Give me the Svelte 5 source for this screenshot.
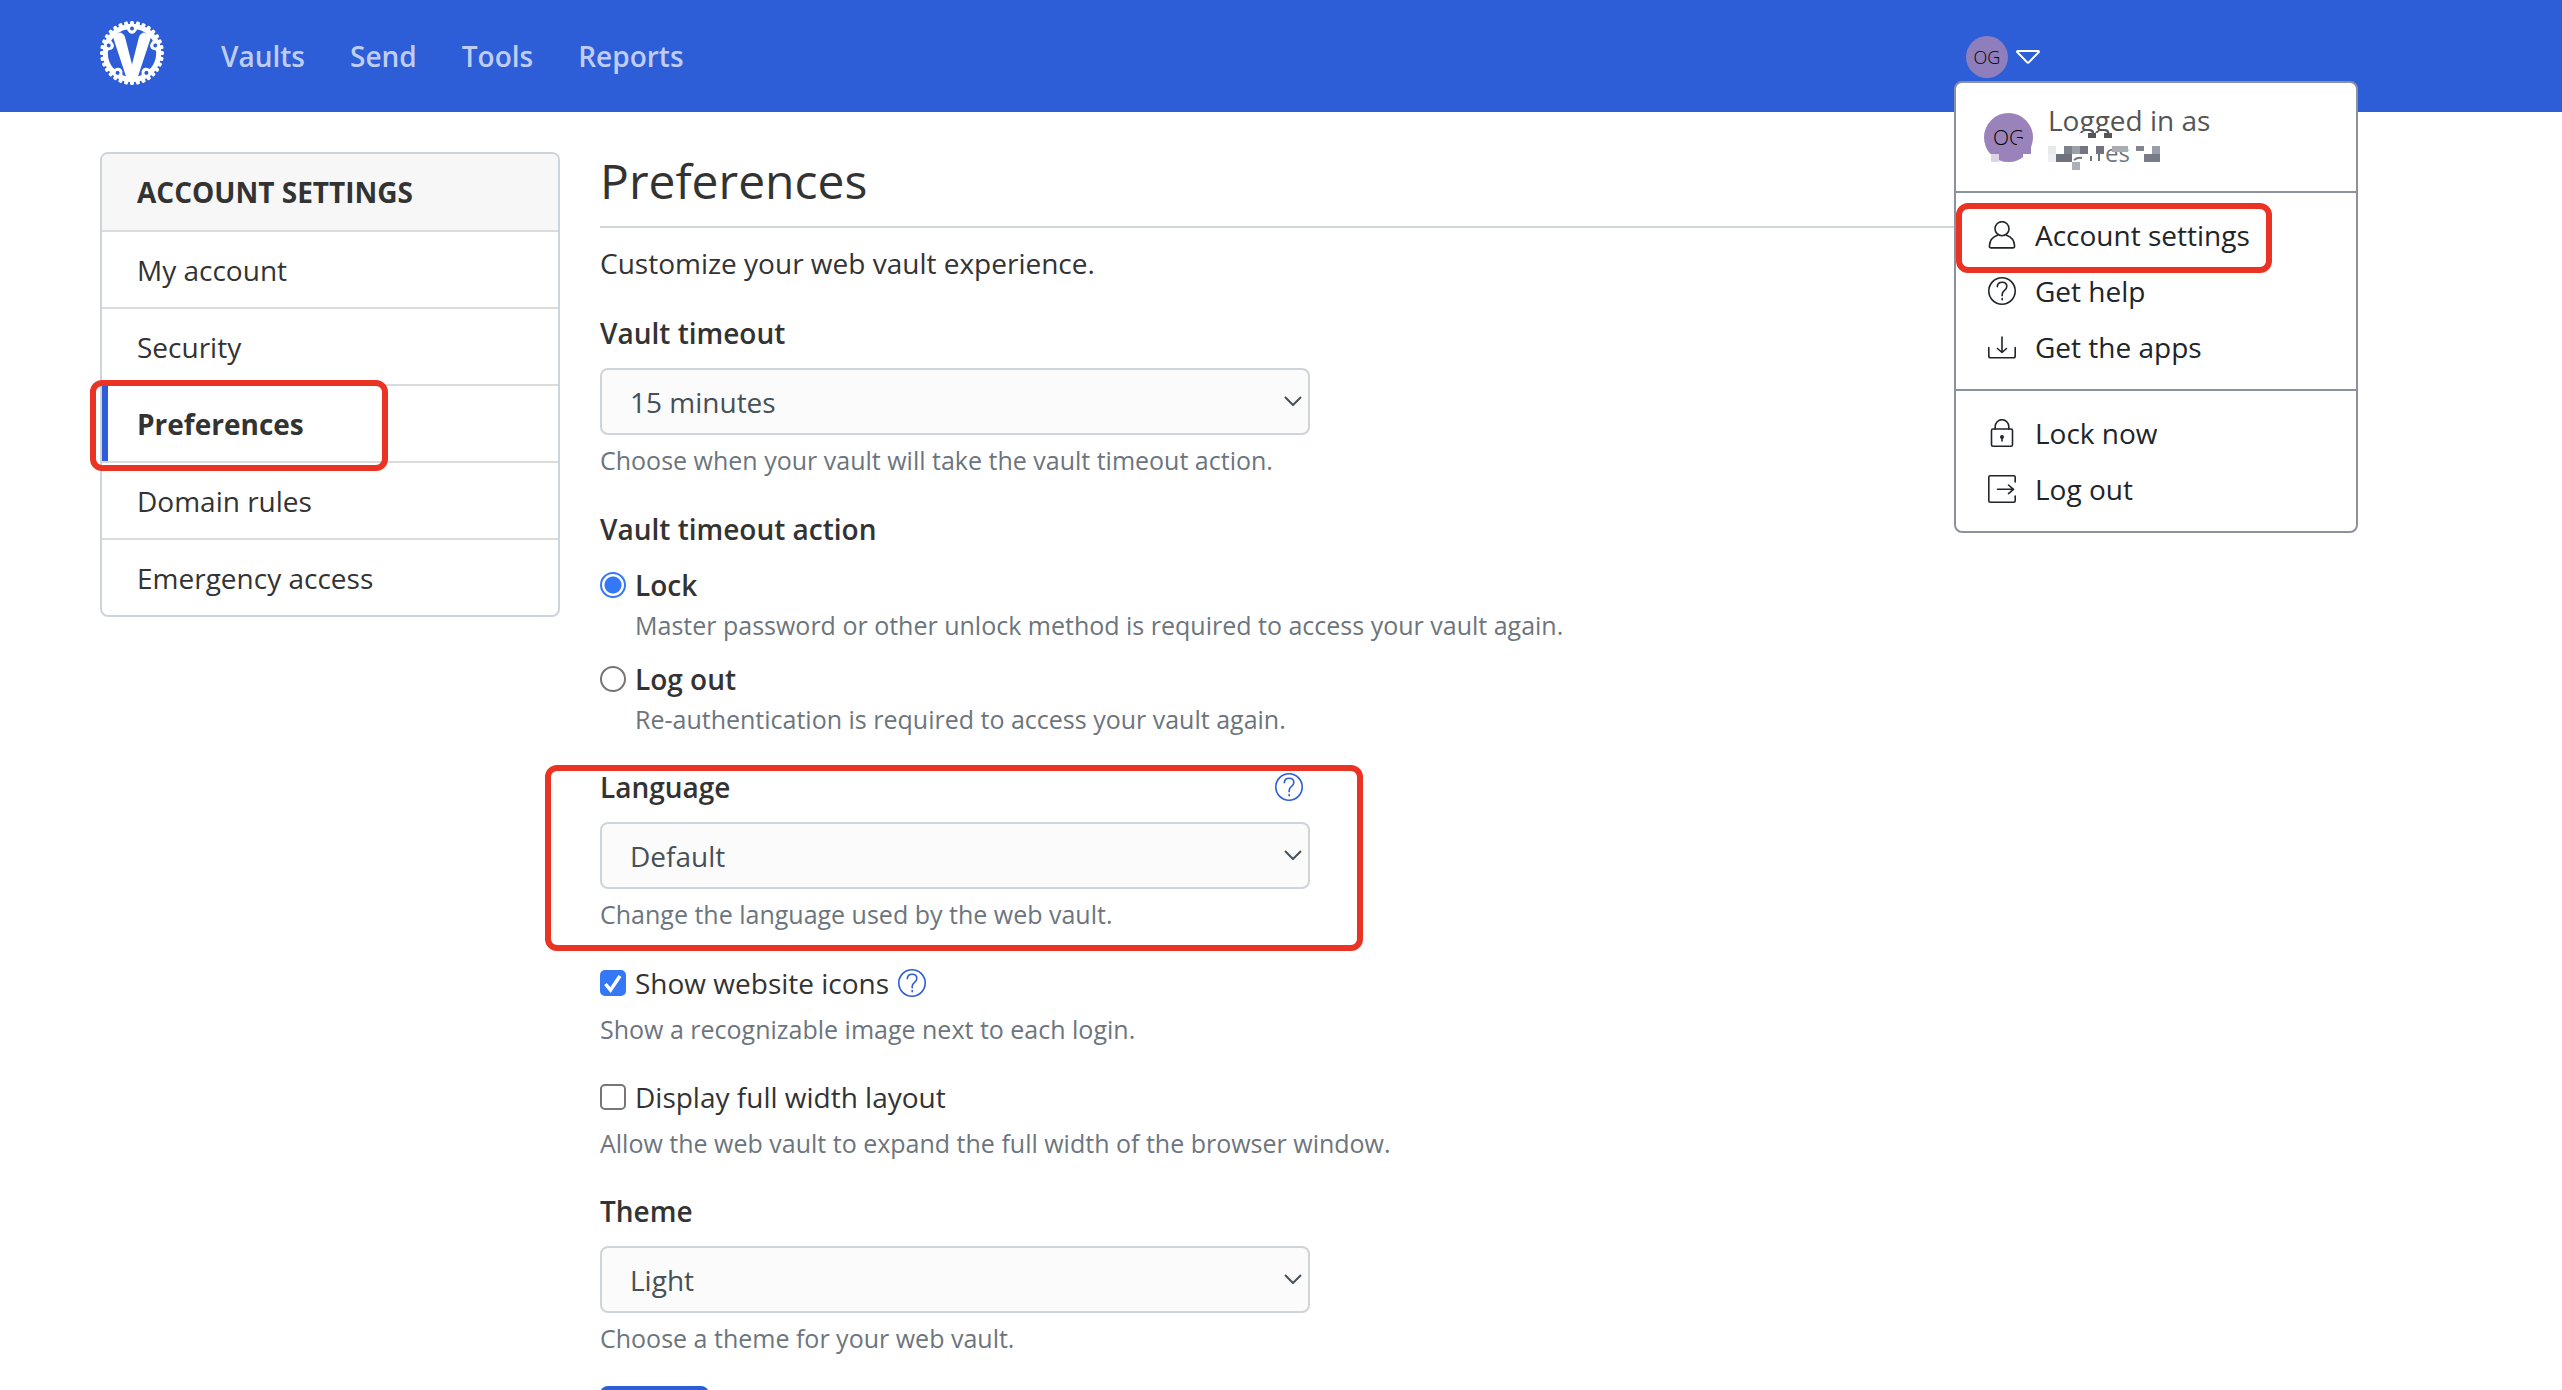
<script lang="ts">
	type Icon = 'user' | 'help' | 'download' | 'lock' | 'logout'

	interface MenuItem {
		label: string
		icon: Icon
		marked?: boolean
	}

	const links = ['Vaults', 'Send', 'Tools', 'Reports']
	const sections = ['My account', 'Security', 'Preferences', 'Domain rules', 'Emergency access']
	const menuGroups: MenuItem[][] = [
		[
			{ label: 'Account settings', icon: 'user', marked: true },
			{ label: 'Get help', icon: 'help' },
			{ label: 'Get the apps', icon: 'download' }
		],
		[
			{ label: 'Lock now', icon: 'lock' },
			{ label: 'Log out', icon: 'logout' }
		]
	]
	const teeth = Array.from({ length: 32 }, (_, i) => i * 11.25)
	const bolts = [0, 72, 144, 216, 288]

	// censored user name: x, y, width, height, shade
	const blocks: [number, number, number, number, string][] = [
		[32, 1, 36, 8, '#fff'],
		[40, 1, 8, 5, '#555'],
		[56, 1, 8, 5, '#555'],
		[0, 14, 8, 8, '#e6e8ea'],
		[0, 22, 8, 8, '#eeeff0'],
		[16, 14, 8, 8, '#7d828c'],
		[24, 14, 8, 8, '#9b9fa6'],
		[32, 14, 8, 8, '#70757f'],
		[8, 22, 16, 8, '#6d727d'],
		[24, 30, 8, 8, '#adb0b6'],
		[48, 14, 8, 8, '#6f747f'],
		[64, 14, 16, 6, '#a9adb3'],
		[88, 14, 8, 5, '#80858e'],
		[104, 14, 8, 8, '#9a9ea6'],
		[96, 22, 16, 8, '#777c87']
	]

	let active = $state('Preferences')
	let menuOpen = $state(true)
	let timeout = $state('15 minutes')
	let action = $state('lock')
	let language = $state('Default')
	let showIcons = $state(true)
	let fullWidth = $state(false)
	let theme = $state('Light')
</script>

{#snippet helpIcon()}
	<svg class="icon" viewBox="0 0 28 28" aria-hidden="true">
		<circle cx="14" cy="14" r="13.2" />
		<path d="M9.3 9.6C9.5 6.900 11.400 5.300 14.100 5.300s4.700 1.700 4.700 4.200c0 2-1 3-2.500 4.100-1.500 1.200-2.100 1.900-2.100 3.700v1.500" />
		<path d="M14.200 21.500v1.300" />
	</svg>
{/snippet}

{#snippet menuIcon(name: Icon)}
	{#if name === 'help'}
		{@render helpIcon()}
	{:else}
		<svg class="icon" viewBox="0 0 28 28" aria-hidden="true">
			{#if name === 'user'}
				<circle cx="14" cy="7.700" r="7" />
				<path d="M9.500 14.300C5 15.800 1.700 20 1.400 24.900c-.1 1.300.6 2 1.800 2h21.600c1.200 0 1.900-.7 1.800-2-.3-4.900-3.600-9.100-8.100-10.600" />
			{:else if name === 'download'}
				<path d="M.8 14.500v8.500c0 1.200.6 1.800 1.800 1.800h22.800c1.200 0 1.800-.6 1.800-1.800v-8.500M14 4v15.500M9.500 15.500l4.500 4 4.500-4" />
			{:else if name === 'lock'}
				<rect x="3.500" y="10" width="21" height="17.200" rx="1.500" />
				<path d="M7.200 10V7.500a6.800 6.800 0 0 1 13.600 0V10" />
				<path d="M14 18v4" />
				<circle class="solid" cx="14" cy="18" r="1.200" />
			{:else}
				<path d="M27.200 7V2.300c0-1-.5-1.500-1.500-1.500H2.300C1.300.8.8 1.300.8 2.300v23.400c0 1 .5 1.500 1.500 1.500h23.400c1 0 1.500-.5 1.500-1.500V21M9.500 14.300h16M20.500 10l5 4.300-5 4.300" />
			{/if}
		</svg>
	{/if}
{/snippet}

<header class="navbar">
	<div class="container bar">
		<a class="brand" href="#vaults" aria-label="Vaultwarden">
			<svg viewBox="0 0 64 64" aria-hidden="true">
				{#each teeth as angle}
					<rect x="30" y="0" width="4" height="5" rx="1.500" transform="rotate({angle} 32 32)" />
				{/each}
				<circle class="ring" cx="32" cy="32" r="26.700" />
				{#each bolts as angle}
					<g transform="rotate({angle} 32 32)">
						<path d="M25 6h14l-4 5.500q-3 2.500-6 0z" />
						<circle class="hole" cx="32" cy="7.500" r="2" />
					</g>
				{/each}
				<path d="M12.500 14.500L20 11.500q3.500.5 5 4.500l7 27.500L39 16q1.500-4 5-4.500l7.500 3L36.500 60h-9z" />
			</svg>
		</a>
		<nav class="links" aria-label="Main">
			{#each links as link}
				<a href="#{link.toLowerCase()}">{link}</a>
			{/each}
		</nav>
		<div class="account">
			<button class="toggle" aria-label="Account menu" aria-expanded={menuOpen} onclick={() => (menuOpen = !menuOpen)}>
				<span class="avatar">OG</span>
				<svg class="caret" viewBox="0 0 24 14" aria-hidden="true">
					<path d="M2 1h20c.9 0 1.200.7.6 1.300L12.800 12.400c-.5.600-1.100.600-1.600 0L1.400 2.300C.8 1.700 1.100 1 2 1z" />
				</svg>
			</button>
			{#if menuOpen}
				<div class="menu">
					<div class="whoami">
						<svg class="portrait" viewBox="0 0 49 49" aria-hidden="true">
							<circle cx="24.500" cy="24.500" r="24.500" />
							<text x="9" y="32">OG</text>
							<path d="M33 26h6v8h-6zM39 20h8v21h-8z" />
							<path class="cut" d="M0 41h15v8H0zM39 41h10v8H39z" />
							<path class="faint" d="M7 41h8v8H7z" />
						</svg>
						<div class="who">
							<span>Logged in as</span>
							<svg class="censored" viewBox="0 0 112 38" aria-hidden="true">
								<text x="57" y="30">es</text>
								<path d="M43 24v5M51 22v7M26 28q4-3 8-2" />
								{#each blocks as [x, y, width, height, fill]}
									<rect {x} {y} {width} {height} {fill} />
								{/each}
							</svg>
						</div>
					</div>
					{#each menuGroups as group}
						<div class="group">
							{#each group as item}
								<a class="item" class:marked={item.marked} href="#{item.icon}">
									{@render menuIcon(item.icon)}
									{item.label}
								</a>
							{/each}
						</div>
					{/each}
				</div>
			{/if}
		</div>
	</div>
</header>

<div class="container page">
	<aside class="card">
		<h2>Account settings</h2>
		<nav aria-label="Account settings">
			{#each sections as section}
				<a
					class="section"
					class:active={active === section}
					href="#{section.toLowerCase().replace(' ', '-')}"
					onclick={() => (active = section)}
				>{section}</a>
			{/each}
		</nav>
	</aside>

	<main>
		<h1>Preferences</h1>
		<p class="intro">Customize your web vault experience.</p>

		<form>
			<div class="field">
				<label class="title" for="timeout">Vault timeout</label>
				<div class="select">
					<select id="timeout" bind:value={timeout}>
						<option>15 minutes</option>
						<option>1 hour</option>
					</select>
					<svg viewBox="0 0 18 10" aria-hidden="true"><path d="M1 1l8 8 8-8" /></svg>
				</div>
				<small>Choose when your vault will take the vault timeout action.</small>
			</div>

			<fieldset>
				<legend class="title">Vault timeout action</legend>
				<div class="choices">
					<div class="choice">
						<input id="lock" type="radio" name="action" value="lock" bind:group={action} />
						<label class="title" for="lock">Lock</label>
						<small>Master password or other unlock method is required to access your vault again.</small>
					</div>
					<div class="choice">
						<input id="logout" type="radio" name="action" value="logout" bind:group={action} />
						<label class="title" for="logout">Log out</label>
						<small>Re-authentication is required to access your vault again.</small>
					</div>
				</div>
			</fieldset>

			<div class="field outlined">
				<div class="heading">
					<label class="title" for="language">Language</label>
					<a class="help" href="#language-help" aria-label="Learn more about language">{@render helpIcon()}</a>
				</div>
				<div class="select">
					<select id="language" bind:value={language}>
						<option>Default</option>
						<option>English</option>
					</select>
					<svg viewBox="0 0 18 10" aria-hidden="true"><path d="M1 1l8 8 8-8" /></svg>
				</div>
				<small>Change the language used by the web vault.</small>
			</div>

			<div class="toggle-field">
				<div class="check">
					<input id="icons" type="checkbox" bind:checked={showIcons} />
					<label for="icons">Show website icons</label>
					<a class="help" href="#icons-help" aria-label="Learn more about website icons">{@render helpIcon()}</a>
				</div>
				<small>Show a recognizable image next to each login.</small>
			</div>

			<div class="toggle-field">
				<div class="check">
					<input id="full-width" type="checkbox" bind:checked={fullWidth} />
					<label for="full-width">Display full width layout</label>
				</div>
				<small>Allow the web vault to expand the full width of the browser window.</small>
			</div>

			<div class="field">
				<label class="title" for="theme">Theme</label>
				<div class="select">
					<select id="theme" bind:value={theme}>
						<option>Light</option>
						<option>Dark</option>
					</select>
					<svg viewBox="0 0 18 10" aria-hidden="true"><path d="M1 1l8 8 8-8" /></svg>
				</div>
				<small>Choose a theme for your web vault.</small>
			</div>

			<button class="save" type="submit" aria-label="Save"></button>
		</form>
	</main>
</div>

<style>
	:global(body) {
		background: #fff;
		color: #333;
		font-family: 'Open Sans', 'Noto Sans', sans-serif;
		font-size: 28px;
		line-height: 42px;
	}

	a {
		color: inherit;
		text-decoration: none;
	}

	.container {
		box-sizing: border-box;
		max-width: 2080px;
		padding: 0 20px 0 100px;
	}

	.navbar {
		background: #2d5dd7;
	}

	.bar {
		display: flex;
		align-items: center;
		height: 112px;
	}

	.brand {
		width: 64px;
		height: 64px;
		margin: 0 57px 6px 0;
	}

	.brand svg {
		display: block;
		fill: #fff;
	}

	.brand .ring {
		fill: none;
		stroke: #fff;
		stroke-width: 5;
	}

	.brand .hole {
		fill: #2d5dd7;
	}

	.links {
		display: flex;
		gap: 45px;
		color: #c0cdf2;
		font-weight: 600;
	}

	.account {
		position: relative;
		margin-left: auto;
		padding-right: 20px;
	}

	.toggle {
		display: flex;
		align-items: center;
		gap: 8px;
		padding: 2px 0 0;
		border: 0;
		background: none;
	}

	.avatar {
		width: 42px;
		height: 42px;
		border-radius: 50%;
		background: #8e7ebb;
		color: #000;
		font: 300 18px/42px 'Open Sans', sans-serif;
		text-align: center;
	}

	.portrait {
		width: 49px;
		height: 49px;
		margin-top: 14px;
		fill: #9a83bb;
	}

	.portrait text {
		fill: #000;
		font: 300 21px 'Open Sans', sans-serif;
	}

	.portrait .cut {
		fill: #fff;
	}

	.portrait .faint {
		fill: #dcd3e6;
	}

	.caret {
		width: 24px;
		height: 14px;
		fill: none;
		stroke: #fff;
		stroke-width: 2;
	}

	.menu {
		position: absolute;
		top: 47px;
		left: -12px;
		z-index: 1;
		width: 400px;
		border: 2px solid #8c919e;
		border-radius: 8px;
		background: #fff;
		color: #212529;
	}

	.whoami {
		display: flex;
		gap: 15px;
		padding: 16px 28px 13px;
	}

	.who {
		display: flex;
		flex-direction: column;
		color: #555;
	}

	.censored {
		width: 112px;
		height: 38px;
		margin: -9px 0 8px;
		fill: none;
		stroke: #6c757d;
		stroke-width: 2;
	}

	.censored text {
		fill: #6c757d;
		stroke: none;
		font-size: 24px;
	}

	.censored rect {
		stroke: none;
	}

	.group {
		padding: 14px 0;
		border-top: 2px solid #8c919e;
	}

	.item {
		position: relative;
		display: flex;
		align-items: center;
		gap: 19px;
		height: 56px;
		padding: 0 32px;
	}

	.icon {
		display: block;
		flex: none;
		width: 28px;
		height: 28px;
		fill: none;
		stroke: currentColor;
		stroke-width: 1.6;
		stroke-linecap: round;
		stroke-linejoin: round;
	}

	.solid {
		fill: currentColor;
	}

	.marked::after {
		content: '';
		position: absolute;
		inset: -4px 84px -10px 0;
		border: 6px solid #ea3323;
		border-radius: 12px;
	}

	.page {
		display: grid;
		grid-template-columns: 460px minmax(0, 1fr);
		align-items: start;
		gap: 40px;
		padding-top: 40px;
	}

	.card {
		border: 2px solid #ced4da;
		border-radius: 8px;
	}

	h2 {
		margin: 0;
		padding: 17px 35px;
		border-radius: 6px 6px 0 0;
		background: #f7f7f7;
		font-size: 28px;
		font-weight: 700;
		line-height: 42px;
		text-transform: uppercase;
	}

	.section {
		position: relative;
		display: block;
		padding: 17px 35px 16px;
		border-top: 2px solid #d9dcdf;
	}

	.active {
		padding-left: 29px;
		border-left: 6px solid #2d5dd7;
		font-weight: 700;
	}

	.active::after {
		content: '';
		position: absolute;
		inset: -6px 170px -10px -18px;
		z-index: 1;
		border: 6px solid #ea3323;
		border-radius: 12px;
	}

	h1 {
		margin: 0 0 14px;
		padding-bottom: 16px;
		border-bottom: 2px solid #ced4da;
		font-size: 48px;
		font-weight: 400;
		line-height: 58px;
	}

	.intro {
		margin: 0 0 28px;
	}

	.title {
		font-weight: 600;
	}

	.field {
		position: relative;
		display: flex;
		flex-direction: column;
		width: calc(50% - 20px);
		margin-bottom: 29px;
	}

	small {
		display: block;
		color: #6c757d;
		font-size: 25px;
		line-height: 38px;
	}

	.select {
		position: relative;
		margin: 14px 0 6px;
	}

	select {
		display: block;
		width: 100%;
		height: 67px;
		padding: 0 28px;
		border: 2px solid #ced4da;
		border-radius: 8px;
		appearance: none;
		background: #fbfbfb;
		color: #465057;
		font: inherit;
	}

	.select svg {
		position: absolute;
		top: 28px;
		right: 8px;
		width: 18px;
		height: 10px;
		fill: none;
		stroke: #465057;
		stroke-width: 2;
		pointer-events: none;
	}

	fieldset {
		margin: 0 0 28px;
		padding: 0;
		border: 0;
	}

	legend {
		padding: 0;
		margin-bottom: 14px;
	}

	.choices {
		display: flex;
		flex-direction: column;
		gap: 14px;
	}

	.choice {
		display: grid;
		grid-template-columns: 26px 1fr;
		column-gap: 9px;
		align-items: center;
	}

	.choice small {
		grid-column: 2;
	}

	input {
		width: 26px;
		height: 26px;
		margin: 0;
		border: 2px solid #767676;
		appearance: none;
		background: #fff;
	}

	input[type='radio'] {
		border-radius: 50%;
	}

	input[type='radio']:checked {
		border-color: #3478f6;
		background: radial-gradient(#3478f6 8px, #fff 9px);
	}

	input[type='checkbox'] {
		border-radius: 5px;
	}

	input[type='checkbox']:checked {
		border-color: #3478f6;
		background: #3478f6 url("data:image/svg+xml,%3Csvg xmlns='http://www.w3.org/2000/svg' viewBox='0 0 22 22'%3E%3Cpath d='M3.500 12l5 6L18 4' fill='none' stroke='white' stroke-width='3.500'/%3E%3C/svg%3E");
	}

	.heading {
		display: flex;
		align-items: center;
		justify-content: space-between;
		padding-right: 7px;
	}

	.help {
		color: #2d5dd7;
	}

	.outlined::after {
		content: '';
		position: absolute;
		inset: -1px -53px -18px -55px;
		border: 6px solid #ea3323;
		border-radius: 12px;
		pointer-events: none;
	}

	.toggle-field {
		margin-bottom: 28px;
	}

	.check {
		display: flex;
		align-items: center;
		gap: 9px;
		margin-bottom: 6px;
	}

	.save {
		display: block;
		width: 109px;
		height: 68px;
		border: 0;
		border-radius: 8px;
		background: #2d5dd7;
	}
</style>
